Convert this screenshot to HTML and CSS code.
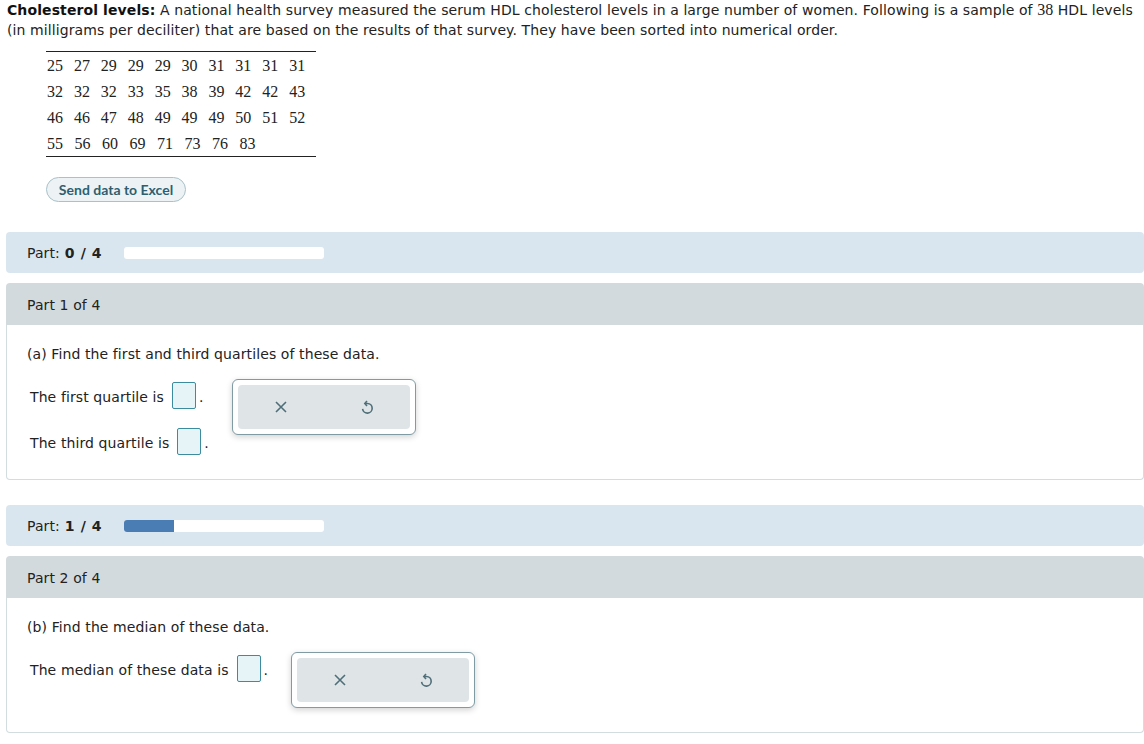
FILE: index.html
```html
<!DOCTYPE html>
<html lang="en">
<head>
  <meta charset="utf-8">
  <title>Cholesterol levels</title>
  <link rel="stylesheet" href="styles.css">
</head>
<body>
  <div class="page">
    <!-- 题目说明 -->
    <p class="intro"><b>Cholesterol levels:</b> A national health survey measured the serum HDL cholesterol levels in a large number of women. Following is a sample of <span class="num">38</span> HDL levels (in milligrams per deciliter) that are based on the results of that survey. They have been sorted into numerical order.</p>

    <!-- 数据表 -->
    <div class="data">
      <div class="row"><span>25</span><span>27</span><span>29</span><span>29</span><span>29</span><span>30</span><span>31</span><span>31</span><span>31</span><span>31</span></div>
      <div class="row"><span>32</span><span>32</span><span>32</span><span>33</span><span>35</span><span>38</span><span>39</span><span>42</span><span>42</span><span>43</span></div>
      <div class="row"><span>46</span><span>46</span><span>47</span><span>48</span><span>49</span><span>49</span><span>49</span><span>50</span><span>51</span><span>52</span></div>
      <div class="row"><span>55</span><span>56</span><span>60</span><span>69</span><span>71</span><span>73</span><span>76</span><span>83</span></div>
    </div>

    <button class="excel">Send data to Excel</button>

    <!-- 第 1 部分 -->
    <div class="progress">Part: <b>0 / 4</b><span class="track"><span class="fill" style="width:0%"></span></span></div>
    <section class="part">
      <div class="part-head">Part 1 of 4</div>
      <div class="part-body">
        <p class="question">(a) Find the first and third quartiles of these data.</p>
        <div class="answer">
          <div class="rows">
            <div class="line">The first quartile is <span class="box"></span>.</div>
            <div class="line">The third quartile is <span class="box"></span>.</div>
          </div>
          <div class="tools">
            <div class="tools-in">
              <span class="tool"><svg width="14" height="14" viewBox="0 0 14 14"><path d="M2 2 L12 12 M12 2 L2 12" stroke="#4f6e79" stroke-width="1.6" fill="none"/></svg></span>
              <span class="tool"><svg width="14" height="16" viewBox="0 0 14 16"><path d="M5.5 4.5 H7.5 A4.8 4.8 0 1 1 2.6 9.8" stroke="#4f6e79" stroke-width="1.6" fill="none"/><path d="M7 2 L4.8 4.5 L7 7" stroke="#4f6e79" stroke-width="1.6" fill="none"/></svg></span>
            </div>
          </div>
        </div>
      </div>
    </section>

    <!-- 第 2 部分 -->
    <div class="progress">Part: <b>1 / 4</b><span class="track"><span class="fill" style="width:25%"></span></span></div>
    <section class="part">
      <div class="part-head">Part 2 of 4</div>
      <div class="part-body">
        <p class="question">(b) Find the median of these data.</p>
        <div class="answer">
          <div class="rows">
            <div class="line">The median of these data is <span class="box"></span>.</div>
          </div>
          <div class="tools">
            <div class="tools-in">
              <span class="tool"><svg width="14" height="14" viewBox="0 0 14 14"><path d="M2 2 L12 12 M12 2 L2 12" stroke="#4f6e79" stroke-width="1.6" fill="none"/></svg></span>
              <span class="tool"><svg width="14" height="16" viewBox="0 0 14 16"><path d="M5.5 4.5 H7.5 A4.8 4.8 0 1 1 2.6 9.8" stroke="#4f6e79" stroke-width="1.6" fill="none"/><path d="M7 2 L4.8 4.5 L7 7" stroke="#4f6e79" stroke-width="1.6" fill="none"/></svg></span>
            </div>
          </div>
        </div>
      </div>
    </section>
  </div>
</body>
</html>
```

FILE: styles.css
```css
/* 全局 */
* { margin: 0; padding: 0; box-sizing: border-box; }
body {
  font-family: 'DejaVu Sans', Verdana, sans-serif;
  font-size: 14px;
  line-height: 20px;
  letter-spacing: 0.1px;
  color: #222;
  background: #fff;
}
.page { padding: 0 0 0 6px; }

/* 说明文字 */
.intro { padding-left: 1px; }
.intro b { color: #111; }
.num { font-family: 'Liberation Serif', serif; font-size: 16px; line-height: 1; letter-spacing: 0; }

/* 数据表 */
.data {
  width: 270px;
  margin: 11px 0 0 40px;
  border-top: 1px solid #222;
  border-bottom: 1px solid #222;
  font-family: 'Liberation Serif', 'Times New Roman', serif;
  font-size: 16px;
  letter-spacing: 0;
  color: #222;
}
.data .row { display: flex; height: 26px; align-items: center; padding: 1px 0 0 1px; }
.data .row span { width: 27.5px; }

/* Excel 按钮 */
.excel {
  display: block;
  margin: 20px 0 30px 40px;
  width: 140px;
  height: 25px;
  border: 1px solid #a9c1c9;
  border-radius: 13px;
  background: #edf3f5;
  color: #2d5f70;
  font-family: Lato, 'Open Sans', sans-serif;
  font-weight: 700;
  font-size: 14px;
  letter-spacing: 0;
}

/* 进度条 */
.progress {
  display: flex;
  align-items: center;
  height: 41px;
  padding-left: 21px;
  background: #dae6ef;
  border-radius: 4px;
}
.progress b { margin-left: 5px; letter-spacing: 0.6px; }
.track {
  width: 200px;
  height: 12px;
  margin-left: 22px;
  background: #fff;
  border-radius: 3px;
  overflow: hidden;
}
.fill { display: block; height: 100%; background: #4a7db3; }

/* 题目部分 */
.part { margin: 10px 0 25px; }
.part-head {
  height: 42px;
  padding: 12px 0 0 21px;
  background: #d2dadd;
  border-radius: 4px 4px 0 0;
}
.part-body {
  border: 1px solid #d3dcdf;
  border-top: none;
  border-radius: 0 0 4px 4px;
  padding: 19px 0 24px 20px;
}
.question { margin-bottom: 15px; }
.answer { display: flex; align-items: flex-start; gap: 23px; }
.rows { display: flex; flex-direction: column; gap: 19px; padding: 3px 0 0 3px; }
.line { display: flex; align-items: center; height: 27px; padding-top: 2px; }
.box {
  display: inline-block;
  width: 24px;
  height: 27px;
  margin: -2px 3px 0 8px;
  background: #e6f4f8;
  border: 1px solid #3b8c9e;
  border-radius: 2px;
}

/* 工具框 */
.tools {
  width: 184px;
  height: 56px;
  padding: 5px;
  background: #fff;
  border: 1px solid #7f9ba4;
  border-radius: 6px;
  box-shadow: 0 2px 6px rgba(0,0,0,0.18);
}
.tools-in {
  display: flex;
  height: 100%;
  background: #dfe5e7;
  border-radius: 4px;
}
.tool { flex: 1; display: flex; align-items: center; justify-content: center; }
```
